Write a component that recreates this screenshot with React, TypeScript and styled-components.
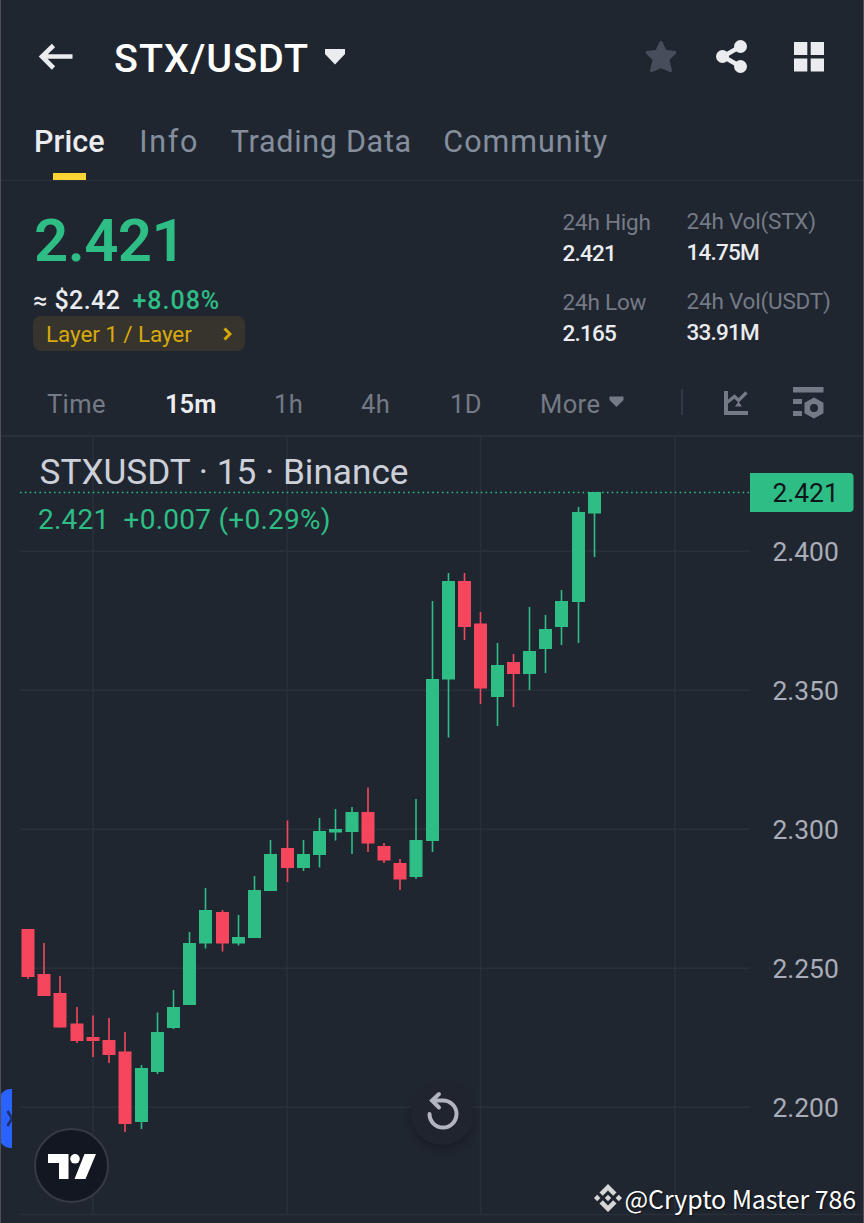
import React from "react";
import styled, { createGlobalStyle } from "styled-components";

const color = {
  bg: "#202630",
  line: "#2a303a",
  text: "#eaecef",
  muted: "#848e9c",
  dim: "#747a86",
  green: "#2ebd85",
  red: "#f6465d",
  yellow: "#fcd535",
};

const GlobalStyle = createGlobalStyle`
  * { box-sizing: border-box; }
  body { margin: 0; background: ${color.bg}; }
`;

const Screen = styled.div`
  position: relative;
  display: flex;
  flex-direction: column;
  width: 864px;
  height: 1223px;
  overflow: hidden;
  background: ${color.bg};
  border-left: 1px solid #4b505b;
  border-right: 1px solid #4b505b;
  font-family: Roboto, "Liberation Sans", sans-serif;
  color: ${color.text};
  white-space: nowrap;

  svg { display: block; flex: none; }
`;

const TopBar = styled.header`
  display: flex;
  align-items: center;
  height: 114px;
  padding: 0 39px 0 36px;
`;

const Pair = styled.h1`
  margin: 3px 0 0 41px;
  font-size: 39.5px;
  line-height: 46px;
  font-weight: 500;
  letter-spacing: 1px;
  color: #fff;
`;

const PairArrow = styled.span`
  display: flex;
  margin-left: 15px;
  margin-bottom: 1px;
`;

const Actions = styled.div`
  display: flex;
  align-items: center;
  margin-left: auto;
`;

const ActionButton = styled.span<{ $gap?: number }>`
  display: flex;
  margin-right: ${(p) => p.$gap ?? 0}px;
`;

const Tabs = styled.nav`
  display: flex;
  height: 67px;
  padding-left: 33px;
  border-bottom: 1px solid ${color.line};
`;

const Tab = styled.div<{ $active?: boolean; $gap: number; $spacing: number }>`
  position: relative;
  height: 66px;
  margin-right: ${(p) => p.$gap}px;
  padding-top: 10px;
  font-size: 30.5px;
  line-height: 36px;
  font-weight: ${(p) => (p.$active ? 500 : 450)};
  letter-spacing: ${(p) => p.$spacing}px;
  color: ${(p) => (p.$active ? color.text : color.muted)};
`;

const TabMark = styled.span`
  position: absolute;
  left: 19px;
  bottom: 0;
  width: 33px;
  height: 7px;
  background: ${color.yellow};
`;

const Summary = styled.section`
  display: flex;
  height: 189px;
  padding-left: 32px;
`;

const PriceBlock = styled.div`
  width: 529.5px;
  padding-top: 24px;
`;

const LastPrice = styled.div`
  padding-left: 1px;
  font-size: 60px;
  line-height: 72px;
  font-weight: 580;
  letter-spacing: -0.6px;
  color: ${color.green};
`;

const FiatRow = styled.div`
  display: flex;
  gap: 12px;
  margin-top: 8px;
  margin-bottom: -1px;
  font-size: 25px;
  line-height: 32px;
  font-weight: 500;
  letter-spacing: 0.45px;
`;

const Change = styled.span`
  letter-spacing: 1px;
  color: ${color.green};
`;

const TagChip = styled.div`
  display: flex;
  align-items: center;
  justify-content: space-between;
  width: 212px;
  height: 35px;
  padding: 0 13px 0 13px;
  border-radius: 8px;
  background: #37342d;
  font-size: 22.5px;
  letter-spacing: -0.1px;
  color: #d9a90c;
`;

const Stats = styled.div`
  display: flex;
`;

const StatColumn = styled.div<{ $top: number; $width: number }>`
  width: ${(p) => p.$width}px;
  padding-top: ${(p) => p.$top}px;
`;

const Stat = styled.div`
  height: 80px;
`;

const StatLabel = styled.div`
  font-size: 22.5px;
  line-height: 30px;
  letter-spacing: -0.2px;
  color: ${color.dim};
`;

const StatValue = styled.div`
  font-size: 22.5px;
  line-height: 32px;
  font-weight: 500;
  letter-spacing: -0.8px;
`;

const Intervals = styled.nav`
  display: flex;
  align-items: center;
  height: 67px;
  padding-left: 46px;
  border-bottom: 2px solid ${color.line};
  font-size: 25.5px;
  color: ${color.dim};
`;

const Interval = styled.div<{ $width: number; $active?: boolean }>`
  width: ${(p) => p.$width}px;
  padding-top: 3px;
  line-height: 32px;
  font-weight: ${(p) => (p.$active ? 650 : 400)};
  letter-spacing: ${(p) => (p.$active ? 0 : 0.4)}px;
  color: ${(p) => (p.$active ? color.text : "inherit")};
`;

const MoreArrow = styled.span`
  width: 72px;
  padding-bottom: 2px;
`;

const Divider = styled.span`
  width: 2px;
  height: 26px;
  margin-right: 41px;
  margin-bottom: 2px;
  background: #343a45;
`;

const ChartTools = styled.div`
  display: flex;
  align-items: center;
  gap: 45px;
  padding-top: 1px;
`;

const ChartArea = styled.main`
  position: relative;
  flex: 1;
`;

const Plot = styled.svg`
  margin-left: -1px;
`;

const Legend = styled.div`
  position: absolute;
  left: 38.5px;
  top: 13px;
`;

const LegendTitle = styled.div`
  font-size: 35.2px;
  line-height: 44px;
  color: #cdd0d9;
`;

const LegendValues = styled.div`
  display: flex;
  gap: 14px;
  margin: 10px 0 0 -1.5px;
  font-size: 28px;
  line-height: 32px;
  letter-spacing: 0.25px;
  color: ${color.green};
`;

const ResetButton = styled.button`
  position: absolute;
  left: 410px;
  top: 645px;
  display: flex;
  align-items: center;
  justify-content: center;
  width: 63px;
  height: 63px;
  padding: 0 0 6px 0;
  border: 0;
  border-radius: 50%;
  background: #20242e;
  box-shadow: 0 5px 6px rgba(16, 18, 28, 0.4);
`;

const SideHandle = styled.div`
  position: absolute;
  left: -1px;
  top: 652px;
  width: 12px;
  height: 59px;
  overflow: hidden;
  border-radius: 10px 0 0 10px;
  background: #2962ff;
`;

const Badge = styled.div`
  position: absolute;
  left: 33px;
  top: 691px;
  display: flex;
  align-items: center;
  justify-content: center;
  width: 75px;
  height: 75px;
  padding: 2px 0 0 1px;
  border: 2px solid #363a45;
  border-radius: 50%;
  background: #131722;
`;

const Watermark = styled.div`
  position: absolute;
  right: 7px;
  bottom: 7px;
  display: flex;
  align-items: center;
  gap: 3px;
  font-family: "Noto Sans CJK SC", "Noto Sans", sans-serif;
  font-size: 25px;
  line-height: 36px;
  letter-spacing: -0.1px;
  color: #fff;
  text-shadow: 1px 1px 2px rgba(0, 0, 0, 0.7);
`;

type Candle = [x: number, high: number, top: number, bottom: number, low: number, up: 0 | 1];

const CHART_TOP = 437;

const candles: Candle[] = [
  [28, 929, 929, 977, 979, 0],
  [44, 943, 974, 996, 996, 0],
  [60, 976, 993, 1027.5, 1027.5, 0],
  [77, 1007, 1023.5, 1041, 1043, 0],
  [93, 1015.5, 1037, 1041, 1057, 0],
  [109, 1018, 1040, 1055, 1063, 0],
  [125, 1032, 1051.5, 1124, 1132, 0],
  [141.5, 1065, 1068, 1122, 1129, 1],
  [157.5, 1012.5, 1032, 1072, 1074, 1],
  [173.5, 990, 1007, 1028, 1029, 1],
  [189.5, 932, 943, 1005, 1005, 1],
  [205.5, 888, 910, 943.5, 948.5, 1],
  [222.5, 910, 912, 943.5, 951.5, 0],
  [238.5, 915, 937, 943.5, 945.5, 1],
  [254.5, 876, 890, 938, 938, 1],
  [270.5, 840, 854, 891, 891, 1],
  [287.5, 820.5, 848, 868, 882, 0],
  [303.5, 840, 854, 868, 871, 1],
  [319.5, 818, 831, 855, 867.5, 1],
  [335.5, 809, 829, 832.5, 840.5, 1],
  [352, 807, 812, 832, 854, 1],
  [368, 787.5, 812, 843.5, 852, 0],
  [384, 843, 846, 860.5, 863, 0],
  [400, 859, 863, 879.5, 890, 0],
  [416, 799, 840, 877, 879, 1],
  [432.5, 601, 679, 841, 852, 1],
  [448.5, 573, 581, 679.5, 737.5, 1],
  [464.5, 573, 581, 627, 640, 0],
  [480.5, 612, 623.5, 688.5, 704, 0],
  [497.5, 643, 665, 697, 726, 1],
  [513.5, 654, 662, 674, 707, 0],
  [529.5, 607, 651, 674, 690, 1],
  [545.5, 615, 629, 649, 673, 1],
  [561.5, 590, 601, 627, 645, 1],
  [578.5, 507, 512, 602, 643, 1],
  [594.5, 492, 492, 513.5, 557, 1],
];

const priceLevels = [
  { label: "2.400", y: 551 },
  { label: "2.350", y: 690 },
  { label: "2.300", y: 829 },
  { label: "2.250", y: 968 },
  { label: "2.200", y: 1107 },
];

const timeLines = [93, 287, 480.5, 675];

function CandleChart() {
  return (
    <Plot width="864" height="786" viewBox={`0 ${CHART_TOP} 864 786`}>
      <g stroke={color.line} strokeWidth="1.6">
        {timeLines.map((x) => (
          <line key={x} x1={x} x2={x} y1={CHART_TOP} y2="1214" />
        ))}
        {priceLevels.map((l) => (
          <line key={l.y} x1="20" x2="750" y1={l.y + 0.2} y2={l.y + 0.2} />
        ))}
        <line x1="20" x2="864" y1="1214.5" y2="1214.5" />
      </g>
      <line
        x1="20"
        x2="750"
        y1="492.5"
        y2="492.5"
        stroke={color.green}
        strokeWidth="1.4"
        strokeDasharray="1.6 3.25"
      />
      {candles.map(([x, high, top, bottom, low, up]) => (
        <g key={x} fill={up ? color.green : color.red}>
          <rect x={x - 0.8} y={high} width="1.6" height={low - high} />
          <rect x={x - 6.5} y={top} width="13" height={bottom - top} />
        </g>
      ))}
      <g fill="#a9adb8" fontFamily="Roboto, sans-serif" fontSize="26.4">
        {priceLevels.map((l) => (
          <text key={l.label} x="772.5" y={l.y + 9.6}>
            {l.label}
          </text>
        ))}
      </g>
      <path d="M750 473h99.500a4 4 0 0 1 4 4v31a4 4 0 0 1-4 4H750z" fill={color.green} />
      <text x="772.5" y="502" fill="#10151c" fontFamily="Roboto, sans-serif" fontSize="26.4">
        2.421
      </text>
    </Plot>
  );
}

function BackIcon() {
  return (
    <svg width="36" height="30" viewBox="0 0 36 30" fill="none" stroke="#eaecef" strokeWidth="4.600">
      <path d="M5 14.500h30.500M16.500 3.500 5 14.500 16.500 26" />
    </svg>
  );
}

function StarIcon() {
  return (
    <svg width="34" height="34" viewBox="0 0 34 34">
      <path
        d="M17 2.500l4.300 8.800 9.500 1.300-7 6.700 2.700 11.200L17 26.500 7.500 30.500l2.700-11.200-7-6.700 9.500-1.300z"
        fill="#474d5a"
        stroke="#474d5a"
        strokeWidth="3"
        strokeLinejoin="round"
      />
    </svg>
  );
}

function ShareIcon() {
  return (
    <svg width="32" height="34" viewBox="0 0 32 34" fill="#eaecef">
      <path d="M24.500 6.500 7 16.500l17.500 10" fill="none" stroke="#eaecef" strokeWidth="4.500" />
      <circle cx="24.500" cy="6.500" r="6.500" />
      <circle cx="6.500" cy="16.500" r="6.500" />
      <circle cx="24.500" cy="26.500" r="6.500" />
    </svg>
  );
}

function GridIcon() {
  return (
    <svg width="30" height="30" viewBox="0 0 30 30" fill="#eaecef">
      <path d="M0 0h13.300v13H0zM16.700 0H30v13H16.700zM0 16.500h13.300V29.500H0zM16.700 16.500H30V29.500H16.700z" />
    </svg>
  );
}

function LineChartIcon() {
  return (
    <svg width="24" height="25" viewBox="0 0 24 25" fill={color.dim}>
      <path d="M0 0h4v20h20v4H0z" />
      <path d="M3 11.500 10.500 5.500 14.500 9.500 22.500 1.500" fill="none" stroke={color.dim} strokeWidth="3.200" />
      <path d="M14.500 10.500l3.500 5H11z" />
    </svg>
  );
}

function IndicatorIcon() {
  return (
    <svg width="31" height="32" viewBox="0 0 31 32" fill={color.dim}>
      <path d="M0 0h30.500v5.500H0zM0 12h9v5H0zM0 24h9v5H0z" />
      <path
        fillRule="evenodd"
        d="M21 10.500l9.500 5.200v10.600L21 31.500l-9.500-5.200V15.700zM21 17a4 4 0 1 0 0 8 4 4 0 0 0 0-8z"
      />
    </svg>
  );
}

function ResetIcon() {
  return (
    <svg width="34" height="40" viewBox="0 0 34 40" fill="none" stroke="#b2b5be" strokeWidth="4">
      <path d="M3.500 23A13.500 13.500 0 1 0 17 9.500H7" strokeLinecap="round" />
      <path d="M13 3 6 9.500l7 7" strokeLinecap="round" />
    </svg>
  );
}

function LogoIcon() {
  return (
    <svg width="48" height="25" viewBox="0 0 48 25" fill="#fff">
      <path d="M0 0h20.500v25H11V9H0zM36.500 0H48L37.500 25H26.500z" />
      <circle cx="27" cy="4.800" r="4.800" />
    </svg>
  );
}

function BinanceIcon() {
  return (
    <svg width="28" height="28" viewBox="0 0 28 28" fill="#d6d6d6">
      <path d="M14 0l8.500 8.500-3.300 3.300L14 6.600 8.800 11.800 5.500 8.500z" />
      <path d="M14 28l8.500-8.500-3.300-3.300L14 21.400l-5.200-5.200-3.300 3.300z" />
      <path d="M3.200 10.800 6.400 14l-3.200 3.200L0 14zM24.800 10.800 28 14l-3.200 3.200-3.200-3.200zM14 10.800l3.200 3.200-3.200 3.200-3.200-3.200z" />
    </svg>
  );
}

export default function App() {
  return (
    <Screen>
      <GlobalStyle />
      <TopBar>
        <BackIcon />
        <Pair>STX/USDT</Pair>
        <PairArrow>
          <svg width="22" height="17" viewBox="0 0 22 17" fill="#eaecef">
            <path d="M1 1h20v5L11 16.500 1 6z" />
          </svg>
        </PairArrow>
        <Actions>
          <ActionButton $gap={38}>
            <StarIcon />
          </ActionButton>
          <ActionButton $gap={46}>
            <ShareIcon />
          </ActionButton>
          <ActionButton>
            <GridIcon />
          </ActionButton>
        </Actions>
      </TopBar>

      <Tabs>
        <Tab $active $gap={34.5} $spacing={0.1}>
          Price
          <TabMark />
        </Tab>
        <Tab $gap={31.5} $spacing={1.7}>Info</Tab>
        <Tab $gap={31.5} $spacing={0.7}>Trading Data</Tab>
        <Tab $gap={0} $spacing={0.95}>Community</Tab>
      </Tabs>

      <Summary>
        <PriceBlock>
          <LastPrice>2.421</LastPrice>
          <FiatRow>
            <span>≈ $2.42</span>
            <Change>+8.08%</Change>
          </FiatRow>
          <TagChip>
            Layer 1 / Layer
            <svg width="9" height="14" viewBox="0 0 9 14" fill="none" stroke="#d9a90c" strokeWidth="3">
              <path d="M1.500 1.500 7 7l-5.500 5.500" />
            </svg>
          </TagChip>
        </PriceBlock>
        <Stats>
          <StatColumn $top={26} $width={124}>
            <Stat>
              <StatLabel>24h High</StatLabel>
              <StatValue>2.421</StatValue>
            </Stat>
            <Stat>
              <StatLabel>24h Low</StatLabel>
              <StatValue>2.165</StatValue>
            </Stat>
          </StatColumn>
          <StatColumn $top={25} $width={150}>
            <Stat>
              <StatLabel>24h Vol(STX)</StatLabel>
              <StatValue>14.75M</StatValue>
            </Stat>
            <Stat>
              <StatLabel>24h Vol(USDT)</StatLabel>
              <StatValue>33.91M</StatValue>
            </Stat>
          </StatColumn>
        </Stats>
      </Summary>

      <Intervals>
        <Interval $width={118}>Time</Interval>
        <Interval $width={109} $active>15m</Interval>
        <Interval $width={87}>1h</Interval>
        <Interval $width={89}>4h</Interval>
        <Interval $width={90}>1D</Interval>
        <Interval $width={69}>More</Interval>
        <MoreArrow>
          <svg width="15" height="11" viewBox="0 0 15 11" fill={color.dim}>
            <path d="M0.500 0.500h14v3.500L7.500 11 0.500 4z" />
          </svg>
        </MoreArrow>
        <Divider />
        <ChartTools>
          <LineChartIcon />
          <IndicatorIcon />
        </ChartTools>
      </Intervals>

      <ChartArea>
        <CandleChart />
        <Legend>
          <LegendTitle>STXUSDT · 15 · Binance</LegendTitle>
          <LegendValues>
            <span>2.421</span>
            <span>+0.007 (+0.29%)</span>
          </LegendValues>
        </Legend>
        <ResetButton aria-label="Reset chart">
          <ResetIcon />
        </ResetButton>
        <SideHandle>
          <svg width="12" height="59" viewBox="0 0 12 59" fill="none" stroke="#1c2f66" strokeWidth="2.500">
            <path d="M7.500 22l4.500 7.500L7.500 37" />
          </svg>
        </SideHandle>
        <Badge>
          <LogoIcon />
        </Badge>
        <Watermark>
          <BinanceIcon />
          <span>@Crypto Master 786</span>
        </Watermark>
      </ChartArea>
    </Screen>
  );
}
